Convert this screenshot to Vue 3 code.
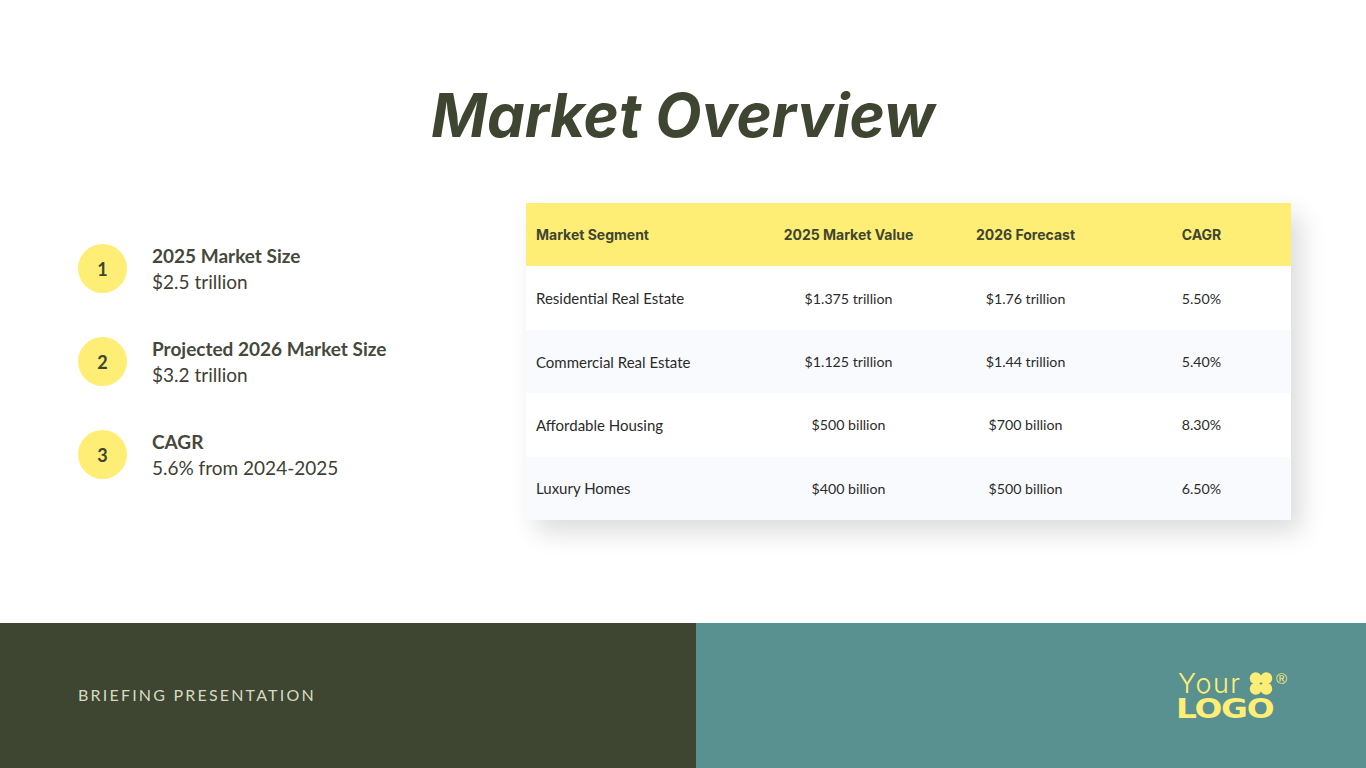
<script setup>
const points = [
  { n: 1, title: '2025 Market Size', value: '$2.5 trillion' },
  { n: 2, title: 'Projected 2026 Market Size', value: '$3.2 trillion' },
  { n: 3, title: 'CAGR', value: '5.6% from 2024-2025' },
]
const headers = ['Market Segment', '2025 Market Value', '2026 Forecast', 'CAGR']
const rows = [
  ['Residential Real Estate', '$1.375 trillion', '$1.76 trillion', '5.50%'],
  ['Commercial Real Estate', '$1.125 trillion', '$1.44 trillion', '5.40%'],
  ['Affordable Housing', '$500 billion', '$700 billion', '8.30%'],
  ['Luxury Homes', '$400 billion', '$500 billion', '6.50%'],
]
</script>

<template>
  <div class="slide">
    <main class="main">
      <h1 class="title">Market Overview</h1>
      <div class="content">
        <ul class="points">
          <li v-for="p in points" :key="p.n" class="point">
            <span class="badge">{{ p.n }}</span>
            <div class="point-text">
              <div class="point-title">{{ p.title }}</div>
              <div class="point-value">{{ p.value }}</div>
            </div>
          </li>
        </ul>
        <div class="table">
          <div class="row head">
            <div v-for="h in headers" :key="h" class="cell">{{ h }}</div>
          </div>
          <div v-for="r in rows" :key="r[0]" class="row body">
            <div v-for="c in r" :key="c" class="cell">{{ c }}</div>
          </div>
        </div>
      </div>
    </main>
    <footer class="footer">
      <div class="foot-left">BRIEFING PRESENTATION</div>
      <div class="foot-right">
        <div class="logo">
          <div class="logo-top">
            <span class="your">Your</span>
            <svg class="flower" viewBox="0 0 24 24" width="24" height="23">
              <circle cx="6.5" cy="6.5" r="6.2" fill="#ffee76" />
              <circle cx="17.5" cy="6.5" r="6.2" fill="#ffee76" />
              <circle cx="6.5" cy="17.5" r="6.2" fill="#ffee76" />
              <circle cx="17.5" cy="17.5" r="6.2" fill="#ffee76" />
              <rect x="6" y="6" width="12" height="12" fill="#ffee76" />
              <path d="M12 10.5v3M10.5 12h3" stroke="#58918f" stroke-width="1" />
            </svg>
            <span class="reg">®</span>
          </div>
          <div class="logo-word">LOGO</div>
        </div>
      </div>
    </footer>
  </div>
</template>

<style scoped>
.slide {
  width: 1366px;
  height: 768px;
  display: flex;
  flex-direction: column;
  background: #fff;
  overflow: hidden;
  font-family: "Lato", "Noto Sans", sans-serif;
}
.main {
  height: 623px;
  display: flex;
  flex-direction: column;
}
.title {
  margin: 0;
  padding-top: 76px;
  height: 203px;
  box-sizing: border-box;
  text-align: center;
  font-family: "Inter", sans-serif;
  font-style: italic;
  font-weight: 700;
  font-size: 60px;
  line-height: 78px;
  color: #3e4530;
}
.content {
  display: flex;
  padding: 0 75px 0 78px;
  justify-content: space-between;
}
.points {
  list-style: none;
  margin: 0;
  padding: 41px 0 0;
  display: flex;
  flex-direction: column;
  gap: 44px;
}
.point {
  display: flex;
  align-items: center;
  gap: 25px;
  height: 49px;
}
.badge {
  width: 49px;
  height: 49px;
  border-radius: 50%;
  background: #ffee76;
  display: flex;
  align-items: center;
  justify-content: center;
  font-weight: 700;
  font-size: 18px;
  color: #3e4530;
}
.point-title {
  font-weight: 700;
  font-size: 19px;
  line-height: 26px;
  color: #45483a;
}
.point-value {
  font-size: 19px;
  line-height: 26px;
  color: #3e4033;
}
.table {
  width: 765px;
  height: 317px;
  display: flex;
  flex-direction: column;
  box-shadow: 10px 12px 24px rgba(0, 0, 0, 0.14);
  background: #fff;
}
.row {
  flex: 1;
  display: grid;
  grid-template-columns: 234px 177px 177px 175px;
  align-items: center;
  font-size: 14.2px;
  color: #2b2b2b;
}
.row.body:nth-child(odd) {
  background: #f9fafd;
}
.cell {
  text-align: center;
}
.cell:first-child {
  text-align: left;
  padding-left: 10px;
}
.body .cell:first-child {
  font-size: 15px;
}
.head {
  background: #ffee76;
  font-family: "Inter", sans-serif;
  font-weight: 700;
  font-size: 14px;
  color: #3e4530;
}
.footer {
  height: 145px;
  display: flex;
}
.foot-left {
  width: 696px;
  background: #3e4530;
  color: #d5dbc2;
  display: flex;
  align-items: center;
  padding: 0 0 2px 78px;
  box-sizing: border-box;
  font-size: 16px;
  letter-spacing: 2.2px;
}
.foot-right {
  flex: 1;
  background: #58918f;
  display: flex;
  align-items: center;
  justify-content: flex-end;
  padding-right: 78px;
}
.logo {
  color: #ffee76;
  width: 110px;
}
.logo-top {
  display: flex;
  align-items: center;
  height: 26px;
}
.your {
  font-family: "Inter", sans-serif;
  font-weight: 300;
  font-size: 27px;
  line-height: 26px;
  letter-spacing: 1.5px;
  width: 71px;
}
.flower {
  flex: none;
}
.reg {
  font-family: "Liberation Sans", sans-serif;
  font-size: 15px;
  align-self: flex-start;
  margin-left: 3px;
  line-height: 16px;
}
.logo-word {
  font-family: "DejaVu Sans", sans-serif;
  font-weight: 700;
  font-size: 26px;
  line-height: 24px;
  letter-spacing: -1px;
  margin-left: -2px;
  transform: scaleX(1.26);
  transform-origin: left center;
}
</style>
